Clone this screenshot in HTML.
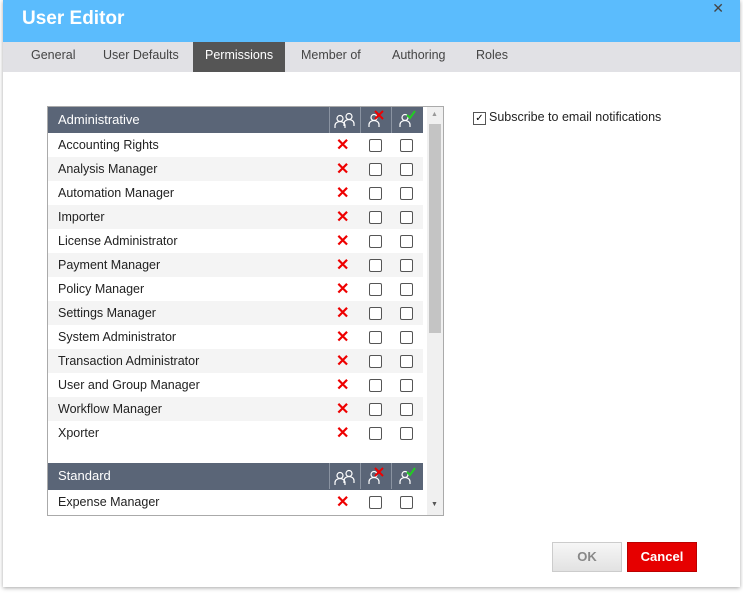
<!DOCTYPE html><html><head><style>
body{margin:0;width:743px;height:595px;background:#fff;font-family:"Liberation Sans",sans-serif;position:relative;overflow:hidden}
.dlg{position:absolute;left:3px;top:0;width:737px;height:587px;background:#fff;box-shadow:0 1px 4px rgba(0,0,0,.35)}
.hd{height:42px;background:#5bbcfd;color:#fff;font-weight:bold;font-size:19px;line-height:38px;padding-left:19px}
.x{position:absolute;right:16px;top:0;color:#444;font-size:14px}
.tabs{height:30px;background:#e1e1e5;font-size:12.5px;color:#444;position:relative}
.tabs span{position:absolute;top:0;line-height:26px}
.act{background:#555;color:#fff;height:30px;padding:0 12px}
.tbl{position:absolute;left:44px;top:106px;width:395px;height:408px;border:1px solid #aaa;overflow:hidden}
.th{position:absolute;left:0;width:375px;height:26px;background:#5a6577;color:#fff;font-size:13px;line-height:26px}
.th .c{position:absolute;top:0;height:26px;border-left:1px solid #8a93a1}
.row{position:absolute;left:0;width:375px;height:24px;font-size:12.5px;line-height:25px;color:#222}
.row.s{background:#f4f4f4}
.t{position:absolute;left:10px}
.rx{position:absolute;left:288px;color:#e00;font-weight:bold;font-size:16px}
.cb{position:absolute;top:6px;width:11px;height:11px;border:1px solid #555;border-radius:2px;background:#fff}
.sb{position:absolute;left:379px;top:0;width:16px;height:408px;background:#f0f0f0}
.btn{position:absolute;top:542px;width:68px;height:28px;font-weight:bold;font-size:13px;text-align:center;line-height:28px}
</style></head><body><div class="dlg">
<div class="hd">User Editor</div><div class="x">✕</div>
<div class="tabs"><span style="left:28px">General</span><span style="left:100px">User Defaults</span><span class="act" style="left:190px">Permissions</span><span style="left:298px">Member of</span><span style="left:389px">Authoring</span><span style="left:473px">Roles</span></div>
</div>
<div class="tbl" style="left:47px">
<svg width="0" height="0" style="position:absolute"><defs>
<g id="p"><circle cx="6" cy="4.5" r="3" fill="none" stroke="#fff" stroke-width="1.2"/><path d="M1 14v-2.5a5 4 0 0 1 10 0v2.5" fill="none" stroke="#fff" stroke-width="1.2"/></g></defs></svg>
<div class="th" style="top:0"><span style="padding-left:10px">Administrative</span>
<div class="c" style="left:281px;width:31px"><svg width="30" height="26"><use href="#p" x="4" y="7"/><use href="#p" x="13" y="5"/></svg></div>
<div class="c" style="left:312px;width:31px"><svg width="30" height="26"><use href="#p" x="7" y="6"/><path d="M14 4l8 8M22 4l-8 8" stroke="#e00" stroke-width="2"/></svg></div>
<div class="c" style="left:343px;width:31px"><svg width="30" height="26"><use href="#p" x="7" y="6"/><path d="M15 8l3 3 5-7" stroke="#2c2" stroke-width="2" fill="none"/></svg></div></div>
<div id="rows"></div>
<div class="th" style="top:356px;height:27px"><span style="padding-left:10px">Standard</span>
<div class="c" style="left:281px;width:31px"><svg width="30" height="26"><use href="#p" x="4" y="8"/><use href="#p" x="13" y="6"/></svg></div>
<div class="c" style="left:312px;width:31px"><svg width="30" height="26"><use href="#p" x="7" y="7"/><path d="M14 5l8 8M22 5l-8 8" stroke="#e00" stroke-width="2"/></svg></div>
<div class="c" style="left:343px;width:31px"><svg width="30" height="26"><use href="#p" x="7" y="7"/><path d="M15 9l3 3 5-7" stroke="#2c2" stroke-width="2" fill="none"/></svg></div></div>
<div class="row" style="top:383px"><span class="t">Expense Manager</span><span class="rx">✕</span><span class="cb" style="left:321px"></span><span class="cb" style="left:352px"></span></div>
<div class="sb"><div style="position:absolute;left:2px;top:17px;width:12px;height:209px;background:#c4c4c4"></div><div style="position:absolute;left:4px;top:4px;font-size:7px;color:#999">▲</div><div style="position:absolute;left:4px;top:394px;font-size:7px;color:#555">▼</div></div>
</div>
<script>
var n=["Accounting Rights","Analysis Manager","Automation Manager","Importer","License Administrator","Payment Manager","Policy Manager","Settings Manager","System Administrator","Transaction Administrator","User and Group Manager","Workflow Manager","Xporter"],h="";
n.forEach(function(t,i){h+='<div class="row'+(i%2?' s':'')+'" style="top:'+(26+i*24)+'px"><span class="t">'+t+'</span><span class="rx">✕</span><span class="cb" style="left:321px"></span><span class="cb" style="left:352px"></span></div>'});
document.getElementById('rows').innerHTML=h;
</script>
<div style="position:absolute;left:473px;top:112px;width:11px;height:11px;border:1px solid #555;font-size:10px;line-height:11px;text-align:center">✓</div>
<div style="position:absolute;left:489px;top:110px;font-size:12.5px;color:#222">Subscribe to email notifications</div>
<div class="btn" style="left:552px;background:linear-gradient(#f6f6f6,#e2e2e2);border:1px solid #ccc;color:#888">OK</div>
<div class="btn" style="left:627px;background:#e60000;border:1px solid #b00;color:#fff">Cancel</div>
</body></html>
